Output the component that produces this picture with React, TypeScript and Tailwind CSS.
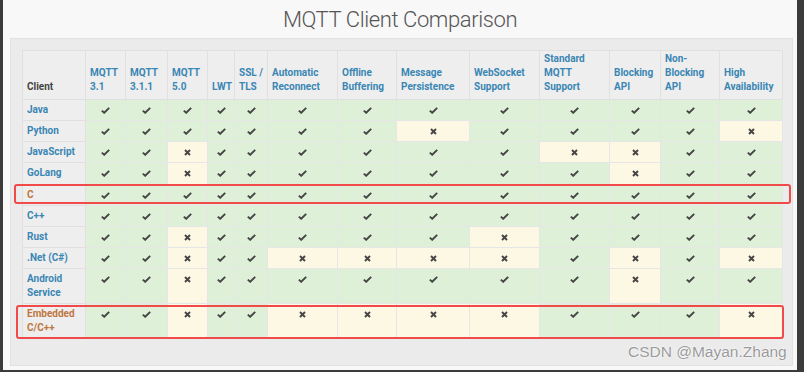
import React from "react"

const columns = [
  { label: ["MQTT", "3.1"], w: 40 },
  { label: ["MQTT", "3.1.1"], w: 42 },
  { label: ["MQTT", "5.0"], w: 40 },
  { label: ["LWT"], w: 27 },
  { label: ["SSL /", "TLS"], w: 33 },
  { label: ["Automatic", "Reconnect"], w: 70 },
  { label: ["Offline", "Buffering"], w: 59 },
  { label: ["Message", "Persistence"], w: 73 },
  { label: ["WebSocket", "Support"], w: 70 },
  { label: ["Standard", "MQTT", "Support"], w: 70 },
  { label: ["Blocking", "API"], w: 51 },
  { label: ["Non-", "Blocking", "API"], w: 59 },
  { label: ["High", "Availability"], w: 63 },
]

// 1 = supported, 0 = not
const rows: { name: string[]; hot?: boolean; v: string; h: number }[] = [
  { name: ["Java"], v: "1111111111111", h: 21 },
  { name: ["Python"], v: "1111111011110", h: 21 },
  { name: ["JavaScript"], v: "1101111110011", h: 21 },
  { name: ["GoLang"], v: "1101111111011", h: 22 },
  { name: ["C"], hot: true, v: "1111111111111", h: 21 },
  { name: ["C++"], v: "1111111111111", h: 21 },
  { name: ["Rust"], v: "1101111101111", h: 21 },
  { name: [".Net (C#)"], v: "1101100001010", h: 21 },
  { name: ["Android", "Service"], v: "1101111111011", h: 35 },
  { name: ["Embedded", "C/C++"], hot: true, v: "1101100001110", h: 33 },
]

function Check() {
  return (
    <svg width="9" height="7" viewBox="0 0 9 7" className="inline-block">
      <path d="M0.8 3.6 L3.2 5.8 L8.2 0.9" fill="none" stroke="#454545" strokeWidth="1.9" />
    </svg>
  )
}

function Cross() {
  return (
    <svg width="7" height="7" viewBox="0 0 7 7" className="inline-block">
      <path d="M1 1 L6 6 M6 1 L1 6" fill="none" stroke="#454545" strokeWidth="1.9" />
    </svg>
  )
}

export default function App() {
  return (
    <div className="w-[804px] h-[372px] bg-[#3b3b3b] flex" style={{ fontFamily: "Roboto, 'Liberation Sans', sans-serif" }}>
      <div className="ml-[3px] w-[794px] h-[370px] bg-[#f8f8f8] relative">
        <h1 className="h-[38px] pt-[6px] text-center text-[22px] leading-[28px] tracking-[-0.4px] font-light text-[#555]">
          MQTT Client Comparison
        </h1>
        <div className="ml-[7px] w-[783px] h-[328px] bg-[#ebebeb] border border-[#e2e2e2] pl-[11px] pt-[11px]">
          <table className="table-fixed border-collapse w-[760px] text-[10px] leading-[14px] font-bold">
            <colgroup>
              <col style={{ width: 63 }} />
              {columns.map((c, i) => (
                <col key={i} style={{ width: c.w }} />
              ))}
            </colgroup>
            <thead>
              <tr className="h-[49px] bg-[#eeeeee]">
                <th className="border border-[#e0e0e0] align-bottom text-left px-[4px] pb-[5px] text-[#444]">Client</th>
                {columns.map((c, i) => (
                  <th key={i} className="border border-[#e0e0e0] align-bottom text-left px-[4px] pb-[5px] text-[#3a86b4]">
                    {c.label.map((l, j) => (
                      <div key={j}>{l}</div>
                    ))}
                  </th>
                ))}
              </tr>
            </thead>
            <tbody>
              {rows.map((r, i) => (
                <tr key={i} style={{ height: r.h }}>
                  <td
                    className={`border border-[#e0e0e0] bg-[#eeeeee] align-top px-[4px] py-[3px] ${
                      r.hot ? "text-[#c0763f]" : "text-[#3a86b4]"
                    }`}
                  >
                    {r.name.map((n, j) => (
                      <div key={j}>{n}</div>
                    ))}
                  </td>
                  {r.v.split("").map((x, j) => (
                    <td
                      key={j}
                      className={`border border-[#e6e6e6] align-top text-center py-[3px] ${
                        x === "1" ? "bg-[#dff0d8]" : "bg-[#fcf8e3]"
                      }`}
                    >
                      <div className="h-[14px] flex items-center justify-center">{x === "1" ? <Check /> : <Cross />}</div>
                    </td>
                  ))}
                </tr>
              ))}
            </tbody>
          </table>
        </div>

        {/* red highlight boxes drawn over the table */}
        <div className="absolute left-[11px] top-[184px] w-[777px] h-[20px] border-2 border-[#f04a4a] rounded-[3px]" />
        <div className="absolute left-[13px] top-[305px] w-[768px] h-[34px] border-2 border-[#f04a4a] rounded-[3px]" />

        <div
          className="absolute left-[625px] top-[342px] whitespace-nowrap text-[15.5px] leading-[20px] text-[#9a9a9a]"
          style={{ fontFamily: "'Liberation Sans', sans-serif", textShadow: "0 0 2px #fff, 0 0 1px #fff" }}
        >
          CSDN @Mayan.Zhang
        </div>
      </div>
    </div>
  )
}
